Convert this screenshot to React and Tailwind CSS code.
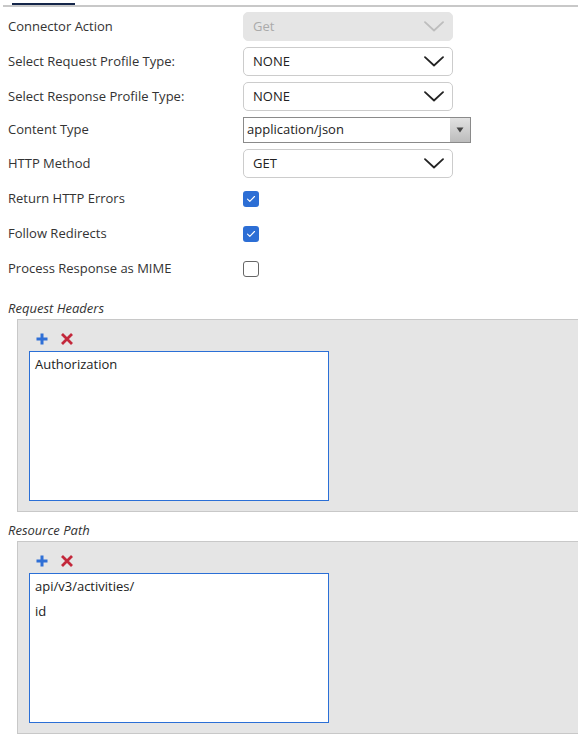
import React from "react";

const font = { fontFamily: '"Open Sans", "Noto Sans", sans-serif' };

function Chevron({ color = "#222" }) {
  return (
    <svg width="20" height="11" viewBox="0 0 20 11" fill="none">
      <path d="M1 1.2 L10 9.5 L19 1.2" stroke={color} strokeWidth="1.8" strokeLinecap="round" strokeLinejoin="round" />
    </svg>
  );
}

function RoundSelect({ value, disabled }) {
  return (
    <div
      className={
        "w-[210px] h-[29px] rounded-[5px] border flex items-center justify-between pl-[9px] pr-[8px] text-[13px] " +
        (disabled ? "bg-[#e5e5e5] border-[#e5e5e5] text-[#aaaaaa]" : "bg-white border-[#cccccc] text-[#222222]")
      }
    >
      <span>{value}</span>
      <Chevron color={disabled ? "#bdbdbd" : "#222"} />
    </div>
  );
}

function Checkbox({ checked }) {
  return checked ? (
    <div className="w-[16px] h-[16px] rounded-[3px] bg-[#2c6ed5] flex items-center justify-center">
      <svg width="10" height="8" viewBox="0 0 10 8" fill="none">
        <path d="M1.5 4.2 L3.8 6.3 L8.5 1.5" stroke="white" strokeWidth="1.1" strokeLinecap="round" strokeLinejoin="round" />
      </svg>
    </div>
  ) : (
    <div className="w-[16px] h-[16px] rounded-[3px] bg-white border border-[#666666]" />
  );
}

function Row({ label, children, h = "h-[29px]" }) {
  return (
    <div className={"flex items-center " + h}>
      <div className="w-[243px] shrink-0 pl-[8px] text-[13px] text-[#333333]">{label}</div>
      {children}
    </div>
  );
}

function PlusIcon() {
  return (
    <svg width="14" height="14" viewBox="0 0 14 14">
      <path d="M7 1.5 V12.5 M1.5 7 H12.5" stroke="#2f6fd6" strokeWidth="3" />
    </svg>
  );
}

function CrossIcon() {
  return (
    <svg width="14" height="14" viewBox="0 0 14 14">
      <path d="M2 2 L12 12 M12 2 L2 12" stroke="#c3283b" strokeWidth="2.8" />
    </svg>
  );
}

function ListPanel({ title, items }) {
  return (
    <div>
      <div className="pl-[8px] text-[13px] italic text-[#333333] h-[18px] leading-[18px] mb-[2px]">{title}</div>
      <div className="ml-[17px] -mr-[6px] h-[193px] bg-[#e5e5e5] border border-[#c8c8c8] pl-[11px] pt-[12px]">
        <div className="flex items-center gap-[11px] pl-[6px] h-[14px]">
          <PlusIcon />
          <CrossIcon />
        </div>
        <div className="mt-[5px] w-[300px] h-[150px] bg-white border border-[#2b6fd6]">
          {items.map((it) => (
            <div key={it} className="h-[25px] leading-[25px] pl-[5px] text-[13px] text-[#222222]">
              {it}
            </div>
          ))}
        </div>
      </div>
    </div>
  );
}

export default function App() {
  return (
    <div className="w-[578px] h-[746px] overflow-hidden bg-white" style={font}>
      <div className="h-[3px]" />
      <div className="ml-[12px] w-[63px] h-[2px] bg-[#15264a]" />
      <div className="ml-[3px] h-[2px] bg-[#c8c8c8]" />
      <div className="mt-[5px] flex flex-col gap-[6px]">
        <Row label="Connector Action">
          <RoundSelect value="Get" disabled />
        </Row>
        <Row label="Select Request Profile Type:">
          <RoundSelect value="NONE" />
        </Row>
        <Row label="Select Response Profile Type:">
          <RoundSelect value="NONE" />
        </Row>
        <Row label="Content Type" h="h-[26px]">
          <div className="w-[228px] h-[26px] border border-[#8a8a8a] flex items-stretch bg-white">
            <div className="flex-1 flex items-center pl-[3px] text-[13px] text-[#222222]">application/json</div>
            <div className="w-[20px] bg-gradient-to-b from-[#e2e2e2] to-[#bcbcbc] flex items-center justify-center">
              <svg width="8" height="6" viewBox="0 0 8 6">
                <path d="M0.5 0.5 H7.5 L4 5.5 Z" fill="#444444" />
              </svg>
            </div>
          </div>
        </Row>
        <Row label="HTTP Method">
          <RoundSelect value="GET" />
        </Row>
        <Row label="Return HTTP Errors">
          <Checkbox checked />
        </Row>
        <Row label="Follow Redirects">
          <Checkbox checked />
        </Row>
        <Row label="Process Response as MIME">
          <Checkbox />
        </Row>
      </div>
      <div className="mt-[16px]">
        <ListPanel title="Request Headers" items={["Authorization"]} />
      </div>
      <div className="mt-[9px]">
        <ListPanel title="Resource Path" items={["api/v3/activities/", "id"]} />
      </div>
    </div>
  );
}
